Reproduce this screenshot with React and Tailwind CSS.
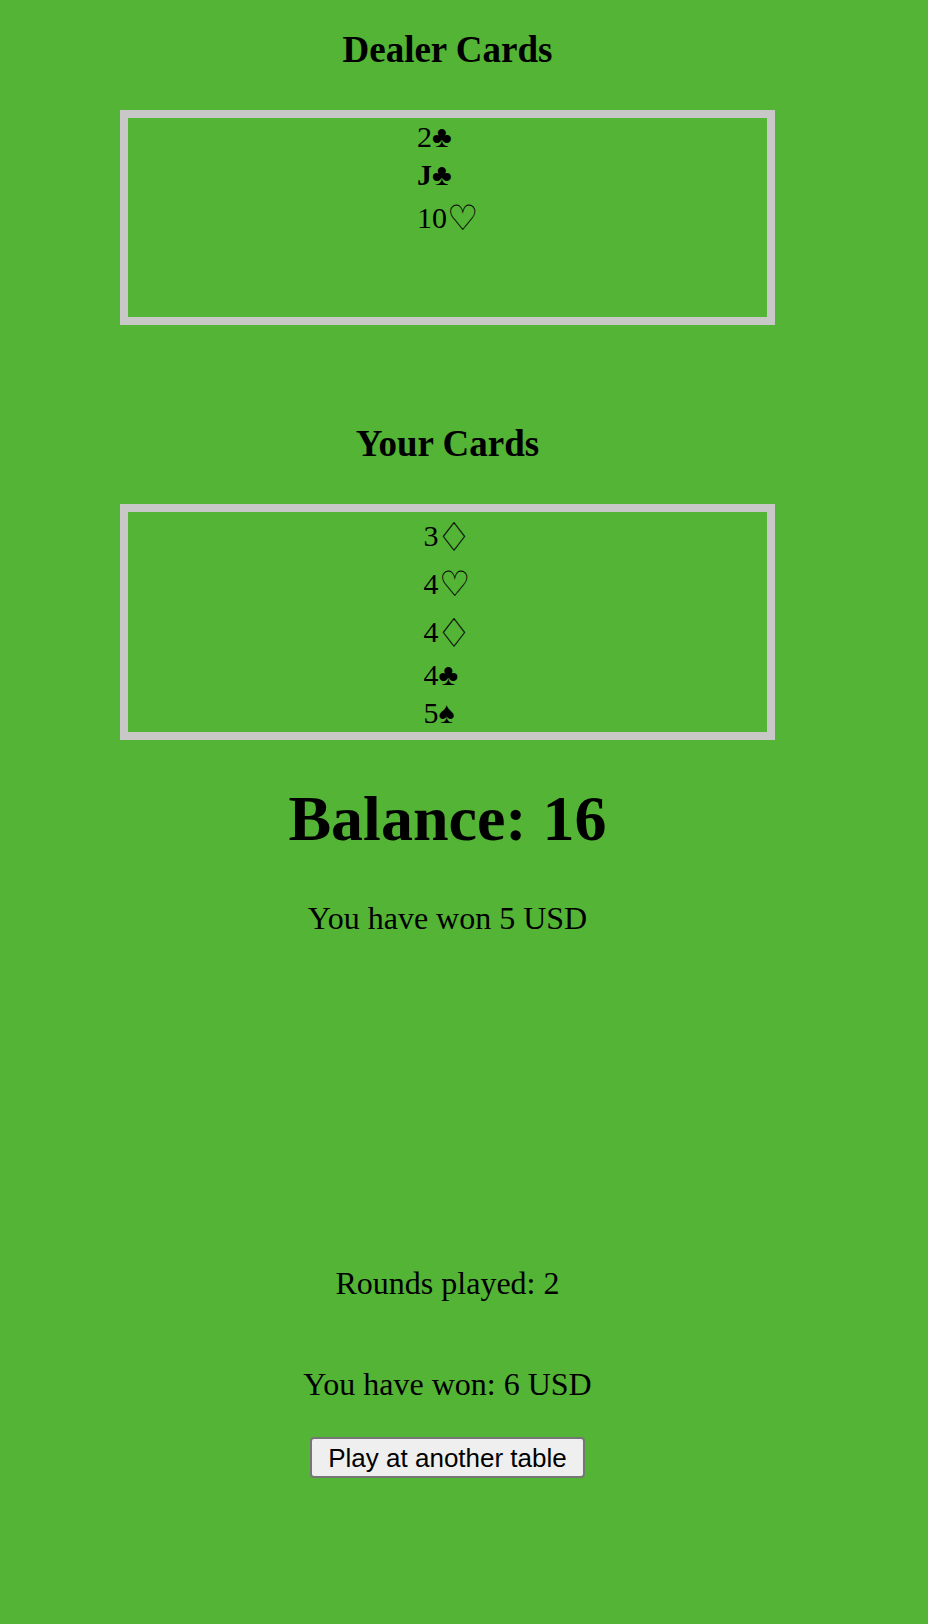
import React from 'react';

const dealerCards = [
  { rank: '2', suit: '♣' },
  { rank: 'J', suit: '♣', bold: true },
  { rank: '10', suit: '♡' },
];

const playerCards = [
  { rank: '3', suit: '♢' },
  { rank: '4', suit: '♡' },
  { rank: '4', suit: '♢' },
  { rank: '4', suit: '♣' },
  { rank: '5', suit: '♠' },
];

function Suit({ suit }) {
  // open suits are drawn larger and thinner in the original
  if (suit === '♢') return <span className="text-[40px] leading-none -ml-[3px] align-[-5px]">{suit}</span>;
  if (suit === '♡') return <span className="text-[35px] leading-none align-[-2px]">{suit}</span>;
  return <span>{suit}</span>;
}

function CardLine({ card }) {
  const tall = card.suit === '♡' || card.suit === '♢';
  return (
    <div className={(tall ? 'h-[48px] leading-[48px]' : 'h-[38px] leading-[38px]') + (card.bold ? ' font-bold' : '')}>
      {card.rank}
      <Suit suit={card.suit} />
    </div>
  );
}

function CardBox({ cards, minH }) {
  return (
    <div className={'w-[655px] border-8 border-[#c8c8c8] flex flex-col items-center ' + minH}>
      <div className="w-fit text-left text-[30px]">
        {cards.map((c, i) => (
          <CardLine key={i} card={c} />
        ))}
      </div>
    </div>
  );
}

export default function App() {
  return (
    <div className="min-h-[1624px] bg-[#54b435] text-black font-['Liberation_Serif','Times_New_Roman',serif]">
      <div className="w-[895px] flex flex-col items-center text-center">
        <h2 className="mt-[29px] text-[37px] leading-[42px] font-bold">Dealer Cards</h2>
        <div className="mt-[39px]">
          <CardBox cards={dealerCards} minH="min-h-[215px]" />
        </div>

        <h2 className="mt-[98px] text-[37px] leading-[42px] font-bold">Your Cards</h2>
        <div className="mt-[39px]">
          <CardBox cards={playerCards} minH="" />
        </div>

        <h1 className="mt-[42px] text-[64px] leading-[74px] font-bold">Balance: 16</h1>
        <p className="mt-[44px] text-[32px] leading-[37px]">You have won 5 USD</p>

        <p className="mt-[328px] text-[32px] leading-[37px]">Rounds played: 2</p>
        <p className="mt-[64px] text-[32px] leading-[37px]">You have won: 6 USD</p>

        <button className="mt-[34px] w-[275px] h-[41px] bg-[#efefef] border-2 border-[#767676] rounded-[4px] text-[26px] leading-[30px] font-['Liberation_Sans',Arial,sans-serif]">
          Play at another table
        </button>
      </div>
    </div>
  );
}
